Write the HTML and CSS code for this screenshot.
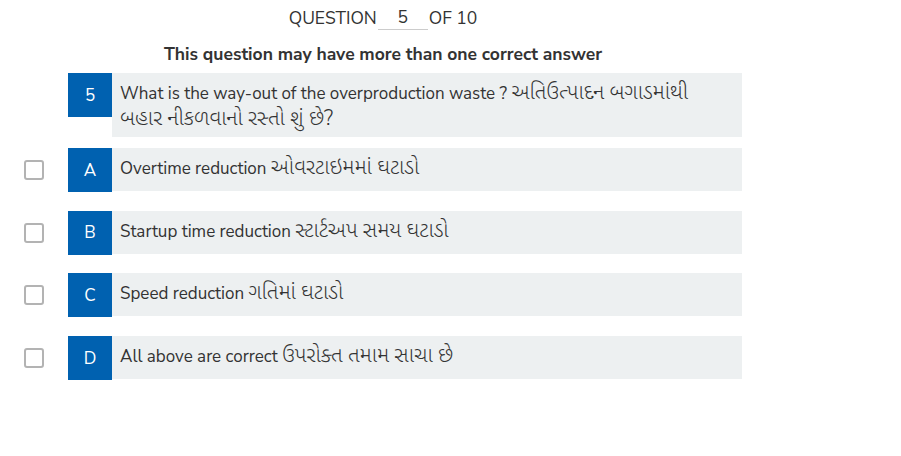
FILE: index.html
```
<!DOCTYPE html>
<html>
<head>
<meta charset="utf-8">
<link rel="stylesheet" href="styles.css">
</head>
<body>
<div class="quiz">
  <div class="counter"><span class="lbl">QUESTION</span><span class="num">5</span><span class="lbl">OF 10</span></div>
  <div class="note">This question may have more than one correct answer</div>
  <div class="row question">
    <div class="mark"></div>
    <div class="badge">5</div>
    <div class="text">What is the way-out of the overproduction waste ? <span class="gu" lang="gu">અતિઉત્પાદન બગાડમાંથી બહાર નીકળવાનો રસ્તો શું છે?</span></div>
  </div>
  <div class="row option">
    <div class="mark"><span class="box"></span></div>
    <div class="badge">A</div>
    <div class="text">Overtime reduction <span class="gu" lang="gu">ઓવરટાઇમમાં ઘટાડો</span></div>
  </div>
  <div class="row option">
    <div class="mark"><span class="box"></span></div>
    <div class="badge">B</div>
    <div class="text">Startup time reduction <span class="gu" lang="gu">સ્ટાર્ટઅપ સમય ઘટાડો</span></div>
  </div>
  <div class="row option">
    <div class="mark"><span class="box"></span></div>
    <div class="badge">C</div>
    <div class="text">Speed reduction <span class="gu" lang="gu">ગતિમાં ઘટાડો</span></div>
  </div>
  <div class="row option">
    <div class="mark"><span class="box"></span></div>
    <div class="badge">D</div>
    <div class="text">All above are correct <span class="gu" lang="gu">ઉપરોક્ત તમામ સાચા છે</span></div>
  </div>
</div>
</body>
</html>
```
FILE: styles.css
```
html, body {
  margin: 0;
  padding: 0;
  background: #ffffff;
}
body {
  font-family: "Nunito Sans", "Lato", "Noto Sans Gujarati", "Lohit Gujarati", sans-serif;
  color: #333333;
  font-size: 16px;
}
.quiz {
  width: 718px;
  margin-left: 24px;
  padding-top: 5px;
}
.counter {
  display: flex;
  justify-content: center;
  align-items: flex-end;
  height: 25px;
  line-height: 23px;
  font-size: 17.5px;
  color: #333;
}
.counter .num {
  width: 50px;
  text-align: center;
  border-bottom: 1px solid #cccccc;
  margin: 0 1px;
  line-height: 23px;
  font-size: 17.5px;
}
.note {
  margin-top: 14px;
  text-align: center;
  font-weight: 700;
  font-size: 17.5px;
  line-height: 20px;
  color: #333;
}
.row {
  display: flex;
  align-items: flex-start;
}
.question {
  margin-top: 9px;
}
.option {
  margin-top: 11px;
}
.option + .option {
  margin-top: 18.7px;
}
.mark {
  width: 44px;
  height: 44px;
  display: flex;
  align-items: center;
  flex: none;
}
.box {
  width: 16px;
  height: 16px;
  border: 2px solid #b3b3b3;
  border-radius: 3px;
  background: #fff;
}
.badge {
  width: 44px;
  height: 44px;
  flex: none;
  background: #0061b0;
  color: #fff;
  display: flex;
  align-items: center;
  justify-content: center;
  font-size: 17px;
}
.text {
  flex: 1;
  background: #edf0f1;
  padding: 7px 8px 9px;
  line-height: 24px;
  height: 27px;
  font-size: 17px;
  color: #333;
}
.gu {
  font-size: 21px;
  line-height: 24px;
  font-weight: 300;
}
.question .text {
  padding: 7px 30px 9px 8px;
  height: 64px;
  box-sizing: border-box;
}
```
